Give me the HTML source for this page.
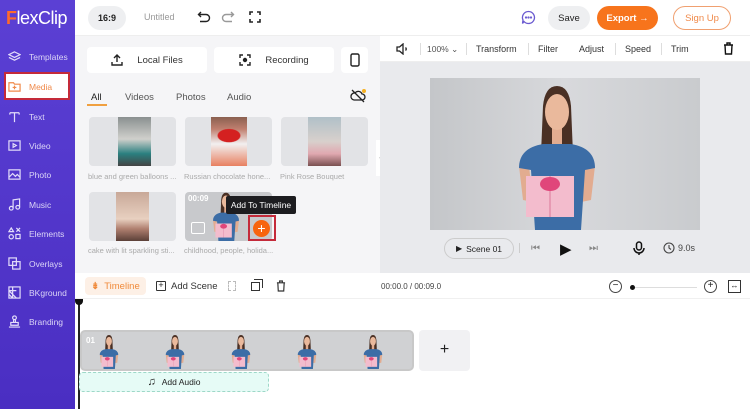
<!DOCTYPE html>
<html><head><meta charset="utf-8"><style>
*{margin:0;padding:0;box-sizing:border-box}
body{width:750px;height:409px;overflow:hidden;font-family:"Liberation Sans",sans-serif;background:#fff;position:relative;font-size:9px;color:#222}
.a{position:absolute}
.side{left:0;top:0;width:75px;height:409px;background:linear-gradient(180deg,#5b40d4,#4a2ec2)}
.nav{left:8px;color:#dcd6f7;font-size:8.5px;display:flex;align-items:center;gap:8px}
.nav svg{width:13px;height:13px;stroke:#e3ddfa;fill:none;stroke-width:1.3}
.btn{background:#fff;border-radius:4px;display:flex;align-items:center;justify-content:center;gap:14px;font-size:9.5px;color:#333}
.thumb{background:#e2e3e6;border-radius:4px;overflow:hidden}
.cap{font-size:7.5px;color:#aaa;white-space:nowrap}
.tb{font-size:9px;color:#333}
.sep{width:1px;height:12px;background:#ddd;top:43px}
</style></head><body>
<svg width="0" height="0" style="position:absolute"><defs>
<symbol id="girl" viewBox="0 0 100 152">
<path d="M36 28 Q38 8 50 8 Q62 8 64 28 L66 76 L34 76 Z" fill="#4a3024"/>
<rect x="45" y="48" width="10" height="20" fill="#e2ac90"/>
<ellipse cx="50" cy="34" rx="12" ry="18" fill="#eab99c"/>
<path d="M12 88 L16 122 L26 124 L22 88Z M88 88 L84 122 L74 124 L78 88Z" fill="#e2ac90"/>
<path d="M12 90 Q12 70 36 66 L64 66 Q88 70 88 90 L78 92 L74 152 L28 152 L24 92 Z" fill="#3c6da6"/>
<rect x="19" y="98" width="48" height="41" fill="#f3bccd"/>
<path d="M43 98 V139" stroke="#e79ab3" stroke-width="2"/>
<ellipse cx="43" cy="106" rx="10" ry="7" fill="#e0467a"/>
</symbol></defs></svg>

<div class="a side"></div>
<div class="a" style="left:6px;top:8px;font-size:18px;color:#fff;letter-spacing:-0.5px"><span style="color:#ff6a2a;font-weight:bold">F</span>lexClip</div>
<div class="a nav" style="top:50px"><svg viewBox="0 0 14 14"><path d="M7 2 L13 5 L7 8 L1 5Z M1 8 L7 11 L13 8"/></svg>Templates</div>
<div class="a" style="left:4px;top:72px;width:66px;height:28px;background:#fff;border:2px solid #c42a3a"></div>
<div class="a nav" style="top:80px;color:#f08a4a"><svg viewBox="0 0 14 14" style="stroke:#f08a4a"><path d="M1 3 H6 L7 4.5 H13 V12 H1Z M7 6 V10 M5 8 H9"/></svg>Media</div>
<div class="a nav" style="top:110px"><svg viewBox="0 0 14 14"><path d="M2 3 H12 M7 3 V13 M2 3 V5 M12 3 V5"/></svg>Text</div>
<div class="a nav" style="top:139px"><svg viewBox="0 0 14 14"><rect x="1" y="2" width="12" height="10"/><path d="M5.5 5 L9 7 L5.5 9Z"/></svg>Video</div>
<div class="a nav" style="top:168px"><svg viewBox="0 0 14 14"><rect x="1" y="2" width="12" height="10"/><path d="M1 10 L5 6 L8 9 L10 7 L13 10"/></svg>Photo</div>
<div class="a nav" style="top:198px"><svg viewBox="0 0 14 14"><circle cx="3.5" cy="11" r="2"/><circle cx="10.5" cy="10" r="2"/><path d="M5.5 11 V2 L12.5 1 V10"/></svg>Music</div>
<div class="a nav" style="top:227px"><svg viewBox="0 0 14 14"><path d="M3.5 1 L6 5 H1Z M9 1 L13 5 M13 1 L9 5"/><circle cx="3.5" cy="10.5" r="2.3"/><rect x="8.5" y="8" width="4.5" height="4.5"/></svg>Elements</div>
<div class="a nav" style="top:257px"><svg viewBox="0 0 14 14"><rect x="1" y="1" width="8" height="8"/><rect x="5" y="5" width="8" height="8"/></svg>Overlays</div>
<div class="a nav" style="top:286px"><svg viewBox="0 0 14 14"><rect x="1" y="1" width="12" height="12"/><path d="M1 5 L9 13 M1 9 L5 13 M5 1 V13 M1 5 H9"/></svg>BKground</div>
<div class="a nav" style="top:315px"><svg viewBox="0 0 14 14"><circle cx="7" cy="3" r="2"/><path d="M6 5 V8 M8 5 V8 M3 8 H11 V11 H3Z M1 13 H13"/></svg>Branding</div>

<!-- top bar -->
<div class="a" style="left:75px;top:0;width:675px;height:36px;background:#fff;border-bottom:1px solid #eee"></div>
<div class="a" style="left:88px;top:6px;width:38px;height:24px;border-radius:12px;background:#eeeff1;font-size:9px;font-weight:bold;display:flex;align-items:center;justify-content:center">16:9</div>
<div class="a" style="left:144px;top:12px;font-size:9px;color:#999">Untitled</div>
<svg class="a" style="left:197px;top:10px" width="14" height="14" viewBox="0 0 14 14" fill="none" stroke="#222" stroke-width="1.4"><path d="M4 2 L1.5 4.5 L4 7 M1.5 4.5 H9 A3.5 3.5 0 0 1 9 11.5 H3"/></svg>
<svg class="a" style="left:221px;top:10px" width="14" height="14" viewBox="0 0 14 14" fill="none" stroke="#999" stroke-width="1.4"><path d="M10 2 L12.5 4.5 L10 7 M12.5 4.5 H5 A3.5 3.5 0 0 0 5 11.5 H11"/></svg>
<svg class="a" style="left:249px;top:11px" width="12" height="12" viewBox="0 0 12 12" fill="none" stroke="#222" stroke-width="1.6"><path d="M1 4 V1 H4 M8 1 H11 V4 M11 8 V11 H8 M4 11 H1 V8"/></svg>
<svg class="a" style="left:521px;top:10px" width="15" height="15" viewBox="0 0 15 15" fill="none" stroke="#6a5ad0" stroke-width="1.3"><path d="M7.5 1.5 A6 6 0 1 1 3 11.5 L1.5 13.5 L2 10 A6 6 0 0 1 7.5 1.5Z"/><circle cx="5" cy="7.5" r=".5"/><circle cx="7.5" cy="7.5" r=".5"/><circle cx="10" cy="7.5" r=".5"/></svg>
<div class="a" style="left:548px;top:6px;width:42px;height:24px;border-radius:12px;background:#eeeff1;font-size:9.5px;display:flex;align-items:center;justify-content:center">Save</div>
<div class="a" style="left:597px;top:6px;width:61px;height:24px;border-radius:12px;background:#f7741c;color:#fff;font-weight:bold;font-size:9.5px;display:flex;align-items:center;justify-content:center">Export →</div>
<div class="a" style="left:673px;top:6px;width:58px;height:24px;border-radius:12px;border:1px solid #f0a070;color:#f08a4a;font-size:9.5px;display:flex;align-items:center;justify-content:center">Sign Up</div>

<!-- media panel -->
<div class="a" style="left:75px;top:36px;width:305px;height:237px;background:#f5f5f7"></div>
<div class="a btn" style="left:87px;top:47px;width:120px;height:26px"><svg width="12" height="12" viewBox="0 0 12 12" fill="none" stroke="#222" stroke-width="1.4"><path d="M6 8 V1 M3 4 L6 1 L9 4 M1 8 V11 H11 V8"/></svg>Local Files</div>
<div class="a btn" style="left:214px;top:47px;width:120px;height:26px"><svg width="12" height="12" viewBox="0 0 12 12" fill="none" stroke="#222" stroke-width="1.4"><path d="M1 4 V1 H4 M8 1 H11 V4 M11 8 V11 H8 M4 11 H1 V8"/><circle cx="6" cy="6" r="1.5" fill="#222"/></svg>Recording</div>
<div class="a btn" style="left:341px;top:47px;width:27px;height:26px"><svg width="10" height="14" viewBox="0 0 10 14" fill="none" stroke="#222" stroke-width="1.4"><rect x="1" y="1" width="8" height="12" rx="1.5"/></svg></div>
<div class="a" style="left:91px;top:92px;font-size:9.5px">All</div>
<div class="a" style="left:87px;top:104px;width:20px;height:2px;background:#f0a040"></div>
<div class="a" style="left:125px;top:92px;font-size:9.5px;color:#555">Videos</div>
<div class="a" style="left:176px;top:92px;font-size:9.5px;color:#555">Photos</div>
<div class="a" style="left:227px;top:92px;font-size:9.5px;color:#555">Audio</div>
<svg class="a" style="left:350px;top:88px" width="17" height="15" viewBox="0 0 17 15" fill="none" stroke="#222" stroke-width="1.3"><path d="M4 12 H12 A3 3 0 0 0 12 6 A4 4 0 0 0 5 5 A3.5 3.5 0 0 0 4 12Z M2 2 L14 14"/><circle cx="14" cy="3" r="2" fill="#f5b020" stroke="none"/></svg>

<div class="a thumb" style="left:89px;top:117px;width:87px;height:49px"><div style="margin-left:29px;width:33px;height:49px;background:linear-gradient(180deg,#8a9090,#d0d0cc 45%,#2a8080 75%,#444)"></div></div>
<div class="a thumb" style="left:185px;top:117px;width:87px;height:49px"><div style="margin-left:26px;width:36px;height:49px;background:radial-gradient(ellipse 12px 7px at 50% 38%,#d42020 90%,transparent 100%),linear-gradient(180deg,#8a6050,#c08070 25%,#f2f0f0 55%,#e88060)"></div></div>
<div class="a thumb" style="left:281px;top:117px;width:87px;height:49px"><div style="margin-left:27px;width:33px;height:49px;background:linear-gradient(180deg,#b0c0c8,#d8d0cc 50%,#e0a8b0 75%,#7a5050)"></div></div>
<div class="a cap" style="left:88px;top:172px">blue and green balloons ...</div>
<div class="a cap" style="left:184px;top:172px">Russian chocolate hone...</div>
<div class="a cap" style="left:280px;top:172px">Pink Rose Bouquet</div>
<div class="a thumb" style="left:89px;top:192px;width:87px;height:49px"><div style="margin-left:27px;width:33px;height:49px;background:linear-gradient(180deg,#c8a898,#e8d0c0 55%,#b08070 75%,#5a4038)"></div></div>
<div class="a thumb" style="left:185px;top:192px;width:87px;height:49px;background:#c8c9cc"><svg style="position:absolute;left:14px;top:-2px" width="54" height="52" viewBox="0 0 100 152" preserveAspectRatio="xMidYMin meet"><use href="#girl"/></svg><div class="a" style="left:3px;top:2px;color:#fff;font-size:8px;font-weight:bold">00:09</div><div class="a" style="left:6px;top:30px;width:14px;height:12px;border:1.5px solid #fff;border-radius:2px"></div></div>
<div class="a" style="left:248px;top:215px;width:28px;height:26px;border:2px solid #c42a3a"></div>
<div class="a" style="left:253px;top:220px;width:17px;height:17px;border-radius:50%;background:#f7640e;color:#fff;font-size:14px;line-height:16px;text-align:center">+</div>
<div class="a" style="left:226px;top:196px;width:70px;height:18px;background:#1d1d20;color:#fff;font-size:8.5px;border-radius:2px;display:flex;align-items:center;justify-content:center">Add To Timeline</div>
<div class="a cap" style="left:88px;top:246px">cake with lit sparkling sti...</div>
<div class="a cap" style="left:184px;top:246px">childhood, people, holida...</div>
<div class="a" style="left:376px;top:140px;width:10px;height:36px;background:#fff;color:#666;font-size:11px;line-height:36px;text-align:center">‹</div>

<!-- preview -->
<div class="a" style="left:380px;top:36px;width:370px;height:26px;background:#fff;border-bottom:1px solid #eee"></div>
<svg class="a" style="left:396px;top:43px" width="13" height="12" viewBox="0 0 13 12" fill="none" stroke="#222" stroke-width="1.3"><path d="M1 4 H3.5 L7 1 V11 L3.5 8 H1Z M9.5 4.5 Q11 6 9.5 7.5"/></svg>
<div class="a sep" style="left:420px"></div>
<div class="a tb" style="left:427px;top:44px;font-size:8.5px;color:#555">100% ⌄</div>
<div class="a sep" style="left:466px"></div>
<div class="a tb" style="left:476px;top:44px">Transform</div>
<div class="a sep" style="left:528px"></div>
<div class="a tb" style="left:538px;top:44px">Filter</div>
<div class="a tb" style="left:579px;top:44px">Adjust</div>
<div class="a sep" style="left:615px"></div>
<div class="a tb" style="left:625px;top:44px">Speed</div>
<div class="a sep" style="left:661px"></div>
<div class="a tb" style="left:671px;top:44px">Trim</div>
<svg class="a" style="left:723px;top:42px" width="11" height="13" viewBox="0 0 11 13" fill="none" stroke="#111" stroke-width="1.4"><path d="M1 3 H10 M4 3 V1 H7 V3 M2 3 L2.5 12 H8.5 L9 3"/></svg>
<div class="a" style="left:380px;top:62px;width:370px;height:211px;background:#e9eaed"></div>
<div class="a" style="left:430px;top:78px;width:270px;height:152px;background:linear-gradient(90deg,#c4c6c9,#d8d9dc 50%,#c9cbce);overflow:hidden"><svg style="position:absolute;left:77px;top:0" width="100" height="152" viewBox="0 0 100 152"><use href="#girl"/></svg></div>
<div class="a" style="left:444px;top:238px;width:70px;height:21px;border:1px solid #ccc;border-radius:11px;font-size:8.5px;display:flex;align-items:center;justify-content:center;gap:4px"><span style="font-size:8px">▶</span>Scene 01</div>
<div class="a" style="left:519px;top:243px;width:1px;height:10px;background:#ccc"></div>
<div class="a" style="left:531px;top:243px;font-size:10px;color:#888">⏮</div>
<div class="a" style="left:560px;top:240px;font-size:15px;color:#111">▶</div>
<div class="a" style="left:589px;top:243px;font-size:10px;color:#888">⏭</div>
<svg class="a" style="left:633px;top:241px" width="12" height="15" viewBox="0 0 12 15" fill="none" stroke="#111" stroke-width="1.5"><rect x="3.5" y="1" width="5" height="8" rx="2.5"/><path d="M1 7 A5 5 0 0 0 11 7 M6 12 V14"/></svg>
<svg class="a" style="left:663px;top:242px" width="12" height="12" viewBox="0 0 12 12" fill="none" stroke="#444" stroke-width="1.1"><circle cx="6" cy="6" r="5"/><path d="M6 3 V6 L8 7.5"/></svg>
<div class="a" style="left:678px;top:243px;font-size:9px;color:#444">9.0s</div>

<!-- timeline -->
<div class="a" style="left:75px;top:273px;width:675px;height:26px;background:#fff;border-bottom:1px solid #f0f0f0"></div>
<div class="a" style="left:85px;top:277px;width:61px;height:18px;border-radius:4px;background:#fdf0e6;color:#f08a3a;font-size:9.5px;display:flex;align-items:center;justify-content:center;gap:5px"><span style="font-weight:bold">⇟</span>Timeline</div>
<div class="a" style="left:156px;top:281px;width:10px;height:10px;border:1.2px solid #333;border-radius:1px;font-size:9px;line-height:7px;text-align:center">+</div>
<div class="a" style="left:171px;top:281px;font-size:9.5px;color:#333">Add Scene</div>
<div class="a" style="left:228px;top:281px;width:8px;height:10px;border:1px dashed #bbb"></div>
<div class="a" style="left:251px;top:282px;width:9px;height:9px;border:1.2px solid #333"></div>
<div class="a" style="left:254px;top:279px;width:9px;height:9px;border-top:1.2px solid #333;border-right:1.2px solid #333"></div>
<svg class="a" style="left:276px;top:280px" width="10" height="12" viewBox="0 0 11 13" fill="none" stroke="#333" stroke-width="1.3"><path d="M1 3 H10 M4 3 V1 H7 V3 M2 3 L2.5 12 H8.5 L9 3"/></svg>
<div class="a" style="left:381px;top:282px;font-size:8px;color:#444">00:00.0 / 00:09.0</div>
<div class="a" style="left:609px;top:280px;width:13px;height:13px;border:1.2px solid #444;border-radius:50%;font-size:10px;line-height:10px;text-align:center">−</div>
<div class="a" style="left:630px;top:285px;width:5px;height:5px;border-radius:50%;background:#111"></div>
<div class="a" style="left:635px;top:287px;width:62px;height:1px;background:#ddd"></div>
<div class="a" style="left:704px;top:280px;width:13px;height:13px;border:1.2px solid #444;border-radius:50%;font-size:10px;line-height:10px;text-align:center">+</div>
<div class="a" style="left:728px;top:280px;width:13px;height:13px;border:1.2px solid #333;font-size:8px;line-height:10px;text-align:center">↔</div>

<div class="a" style="left:78px;top:299px;width:2px;height:110px;background:#222"></div>
<div class="a" style="left:75px;top:299px;width:8px;height:6px;border-radius:0 0 4px 4px;background:#111"></div>
<div class="a" style="left:80px;top:330px;width:334px;height:41px;border:2px solid #c8c8c8;border-radius:5px;background:#d0d1d3;overflow:hidden;display:flex">
<div style="flex:1;position:relative"><svg style="position:absolute;left:9px;top:1px" width="36" height="37" viewBox="0 0 100 152" preserveAspectRatio="xMidYMin meet"><use href="#girl"/></svg></div>
<div style="flex:1;position:relative"><svg style="position:absolute;left:9px;top:1px" width="36" height="37" viewBox="0 0 100 152" preserveAspectRatio="xMidYMin meet"><use href="#girl"/></svg></div>
<div style="flex:1;position:relative"><svg style="position:absolute;left:9px;top:1px" width="36" height="37" viewBox="0 0 100 152" preserveAspectRatio="xMidYMin meet"><use href="#girl"/></svg></div>
<div style="flex:1;position:relative"><svg style="position:absolute;left:9px;top:1px" width="36" height="37" viewBox="0 0 100 152" preserveAspectRatio="xMidYMin meet"><use href="#girl"/></svg></div>
<div style="flex:1;position:relative"><svg style="position:absolute;left:9px;top:1px" width="36" height="37" viewBox="0 0 100 152" preserveAspectRatio="xMidYMin meet"><use href="#girl"/></svg></div>
</div>
<div class="a" style="left:86px;top:336px;color:#fff;font-size:8px;font-weight:bold">01</div>
<div class="a" style="left:419px;top:330px;width:51px;height:41px;background:#f1f1f3;border-radius:4px;font-size:16px;line-height:40px;text-align:center;color:#222">+</div>
<div class="a" style="left:79px;top:372px;width:190px;height:20px;background:#e6fbf6;border:1px dashed #9ed8c8;border-radius:4px;font-size:8.5px;display:flex;align-items:center;justify-content:center;gap:6px"><span style="font-size:11px;font-weight:bold">♫</span>Add Audio</div>
</body></html>
